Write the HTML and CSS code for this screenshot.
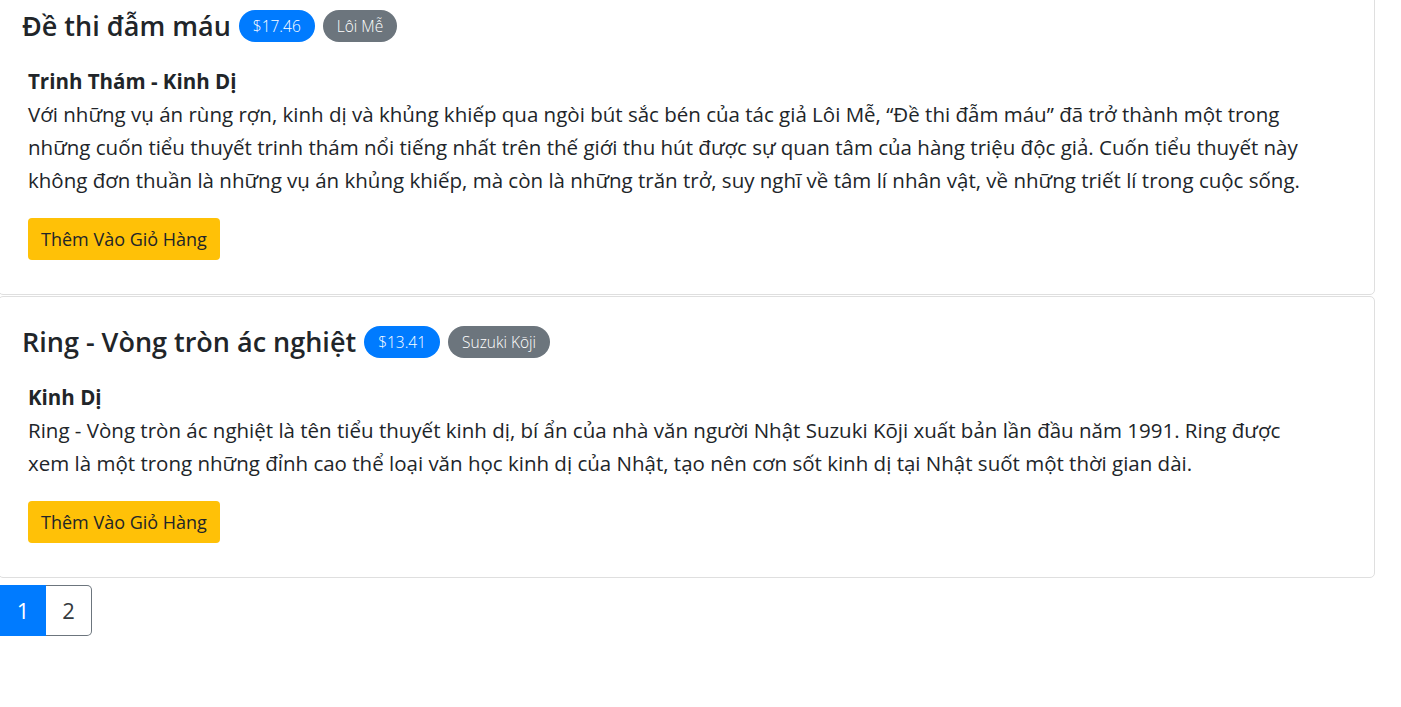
FILE: index.html
```html
<!DOCTYPE html>
<html lang="vi">
<head>
<meta charset="utf-8">
<title>Sách</title>
<link rel="stylesheet" href="styles.css">
</head>
<body>
<div class="page">
  <div class="card">
    <div class="card-head">
      <h4 class="title">Đề thi đẫm máu</h4>
      <span class="badge badge-blue">$17.46</span>
      <span class="badge badge-gray">Lôi Mễ</span>
    </div>
    <div class="card-body">
      <div class="genre">Trinh Thám - Kinh Dị</div>
      <p class="desc">Với những vụ án rùng rợn, kinh dị và khủng khiếp qua ngòi bút sắc bén của tác giả Lôi Mễ, “Đề thi đẫm máu” đã trở thành một trong những cuốn tiểu thuyết trinh thám nổi tiếng nhất trên thế giới thu hút được sự quan tâm của hàng triệu độc giả. Cuốn tiểu thuyết này không đơn thuần là những vụ án khủng khiếp, mà còn là những trăn trở, suy nghĩ về tâm lí nhân vật, về những triết lí trong cuộc sống.</p>
      <button class="btn">Thêm Vào Giỏ Hàng</button>
    </div>
  </div>
  <div class="card">
    <div class="card-head">
      <h4 class="title">Ring - Vòng tròn ác nghiệt</h4>
      <span class="badge badge-blue">$13.41</span>
      <span class="badge badge-gray">Suzuki Kōji</span>
    </div>
    <div class="card-body">
      <div class="genre">Kinh Dị</div>
      <p class="desc">Ring - Vòng tròn ác nghiệt là tên tiểu thuyết kinh dị, bí ẩn của nhà văn người Nhật Suzuki Kōji xuất bản lần đầu năm 1991. Ring được xem là một trong những đỉnh cao thể loại văn học kinh dị của Nhật, tạo nên cơn sốt kinh dị tại Nhật suốt một thời gian dài.</p>
      <button class="btn">Thêm Vào Giỏ Hàng</button>
    </div>
  </div>
  <nav class="pager">
    <a class="page-item active">1</a>
    <a class="page-item">2</a>
  </nav>
</div>
</body>
</html>
```
FILE: styles.css
```css
* { box-sizing: border-box; }
html, body { margin: 0; padding: 0; background: #fff; }
body {
  font-family: "Open Sans", "Noto Sans", sans-serif;
  color: #212529;
}
.page {
  margin-top: -20px;
  width: 1377px;
  margin-left: -2px;
}
.card {
  border: 1px solid #dfdfdf;
  border-radius: 5px;
  margin-bottom: 1px;
  background: #fff;
}
.card-head {
  display: flex;
  align-items: center;
  gap: 8px;
  padding: 29px 20px 0 23px;
}
.title {
  margin: 0;
  font-size: 27px;
  font-weight: 600;
  line-height: 32px;
}
.badge {
  display: inline-block;
  font-size: 15.5px;
  font-weight: 300;
  line-height: 20px;
  padding: 6px 14px;
  border-radius: 16px;
  color: #fff;
}
.badge-blue { background: #007bff; }
.badge-gray { background: #6c757d; }
.card-body {
  padding: 23px 50px 34px 29px;
}
.genre {
  font-weight: 700;
  font-size: 20.5px;
  line-height: 33px;
}
.desc {
  margin: 0 0 21px;
  font-size: 20.5px;
  line-height: 33px;
}
.btn {
  display: inline-block;
  font-family: inherit;
  font-size: 18px;
  line-height: 26px;
  padding: 8px 13px;
  border: 0;
  border-radius: 4px;
  background: #ffc107;
  color: #212529;
}
.pager {
  display: flex;
  margin-top: 7px;
  margin-left: 2px;
}
.page-item {
  display: block;
  width: 46px;
  height: 51px;
  font-size: 22px;
  line-height: 49px;
  text-align: center;
  border: 1px solid #6c757d;
  color: #343a40;
}
.page-item.active {
  background: #007bff;
  border-color: #007bff;
  color: #fff;
}
.page-item:last-child {
  border-radius: 0 5px 5px 0;
  border-left: 0;
}
```
